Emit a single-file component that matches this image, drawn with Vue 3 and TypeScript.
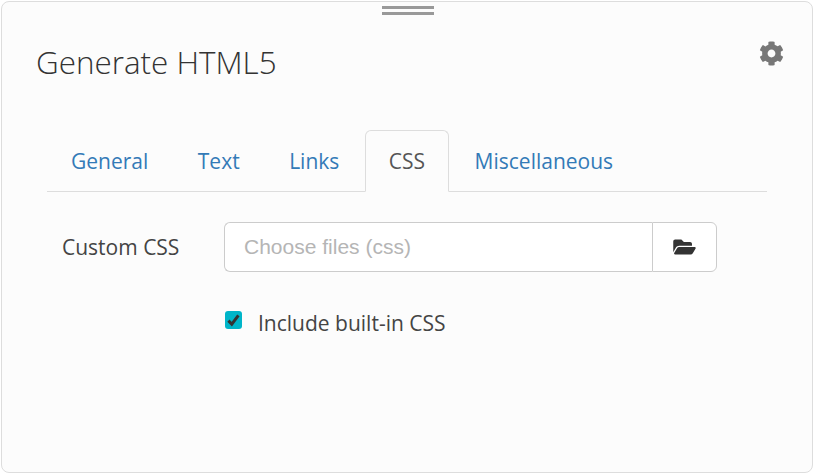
<script setup lang="ts">
const tabs: string[] = ['General', 'Text', 'Links', 'CSS', 'Miscellaneous']
const active = 'CSS'
</script>

<template>
  <div class="panel">
    <div class="handle"></div>
    <header class="head">
      <h1 class="title">Generate HTML5</h1>
      <svg class="gear" viewBox="0 0 512 512" width="25" height="25" aria-hidden="true">
        <path fill="#777" d="M487.4 315.7l-42.6-24.6c4.3-23.2 4.3-47 0-70.2l42.6-24.6c4.9-2.8 7.1-8.6 5.5-14-11.1-35.6-30-67.8-54.7-94.6-3.8-4.1-10-5.1-14.8-2.3L380.8 110c-17.9-15.4-38.5-27.3-60.8-35.1V25.8c0-5.6-3.9-10.5-9.4-11.7-36.7-8.2-74.3-7.8-109.2 0-5.5 1.2-9.4 6.1-9.4 11.7V75c-22.2 7.9-42.8 19.8-60.8 35.1L88.7 85.5c-4.9-2.8-11-1.9-14.8 2.3-24.7 26.7-43.6 58.9-54.7 94.6-1.7 5.4.6 11.2 5.5 14L67.3 221c-4.3 23.2-4.3 47 0 70.2l-42.6 24.6c-4.9 2.8-7.1 8.6-5.5 14 11.1 35.6 30 67.8 54.7 94.6 3.8 4.1 10 5.1 14.8 2.3l42.6-24.6c17.9 15.4 38.5 27.3 60.8 35.1v49.2c0 5.6 3.9 10.5 9.4 11.7 36.7 8.2 74.3 7.8 109.2 0 5.5-1.2 9.4-6.1 9.4-11.7v-49.2c22.2-7.9 42.8-19.8 60.8-35.1l42.6 24.6c4.9 2.8 11 1.9 14.8-2.3 24.7-26.7 43.6-58.9 54.7-94.6 1.5-5.5-.7-11.3-5.6-14.1zM256 336c-44.1 0-80-35.9-80-80s35.9-80 80-80 80 35.9 80 80-35.9 80-80 80z"/>
      </svg>
    </header>

    <nav class="tabs">
      <a
        v-for="tab in tabs"
        :key="tab"
        class="tab"
        :class="{ active: tab === active }"
      >{{ tab }}</a>
    </nav>

    <div class="row">
      <label class="label">Custom CSS</label>
      <div class="group">
        <input class="input" type="text" placeholder="Choose files (css)" />
        <button class="browse" type="button" aria-label="Browse">
          <svg viewBox="0 0 576 512" width="23" height="20" aria-hidden="true">
            <path fill="#333" d="M572.694 292.093L500.27 416.248A63.997 63.997 0 0 1 444.989 448H45.025c-18.523 0-30.064-20.093-20.731-36.093l72.424-124.155A64 64 0 0 1 152 256h399.964c18.523 0 30.064 20.093 20.73 36.093zM152 224h328v-48c0-26.51-21.49-48-48-48H272l-64-64H48C21.49 64 0 85.49 0 112v278.046l69.077-118.418C86.214 242.25 117.989 224 152 224z"/>
          </svg>
        </button>
      </div>
    </div>

    <label class="check">
      <span class="box">
        <svg viewBox="0 0 17 18" width="17" height="18" aria-hidden="true">
          <path d="M3.4 9.6 L6.8 13.2 L13.4 4.4" fill="none" stroke="#333" stroke-width="3"/>
        </svg>
      </span>
      <span>Include built-in CSS</span>
    </label>
  </div>
</template>

<style>
html, body { margin: 0; background: #fff; }
</style>

<style scoped>
.panel {
  position: relative;
  box-sizing: border-box;
  width: 812px;
  height: 472px;
  margin: 1px 0 0 1px;
  background: #fcfcfc;
  border: 1px solid #ddd;
  border-radius: 8px;
  font-family: "Open Sans", sans-serif;
  color: #444;
}
.handle {
  position: absolute;
  left: 380px;
  top: 4px;
  width: 52px;
  height: 3px;
  border-top: 3px solid #999;
  border-bottom: 3px solid #999;
}
.head {
  display: flex;
  justify-content: space-between;
  align-items: flex-start;
  padding: 39px 28px 0 34px;
}
.title {
  margin: 0;
  font-size: 31.4px;
  line-height: 42px;
  font-weight: 300;
  color: #333;
}
.tabs {
  display: flex;
  margin: 47px 45px 0 45px;
  height: 62px;
  box-sizing: border-box;
  border-bottom: 1px solid #ddd;
  gap: 1.5px;
}
.tab {
  box-sizing: border-box;
  height: 62px;
  padding: 0 23px;
  line-height: 60px;
  font-size: 21px;
  color: #337ab7;
  border: 1px solid transparent;
  border-radius: 6px 6px 0 0;
}
.tab.active {
  color: #555;
  background: #fcfcfc;
  border-color: #ddd;
  border-bottom-color: #fcfcfc;
}
.row {
  display: flex;
  align-items: center;
  margin: 30px 0 0 60px;
}
.label {
  width: 162px;
  font-size: 21px;
}
.group {
  display: flex;
  width: 493px;
  height: 50px;
}
.input {
  flex: 1;
  min-width: 0;
  box-sizing: border-box;
  height: 50px;
  padding: 0 19px;
  border: 1px solid #ccc;
  border-right: 0;
  border-radius: 6px 0 0 6px;
  background: #fff;
  font-family: "Liberation Sans", Arial, sans-serif;
  font-size: 21px;
  outline: none;
}
.input::placeholder { color: #b5b5b5; opacity: 1; }
.browse {
  box-sizing: border-box;
  width: 65px;
  height: 50px;
  padding: 0;
  display: flex;
  align-items: center;
  justify-content: center;
  background: #fff;
  border: 1px solid #ccc;
  border-radius: 0 6px 6px 0;
}
.check {
  display: flex;
  align-items: center;
  margin: 35px 0 0 222px;
  font-size: 21px;
  line-height: 32px;
}
.box {
  display: block;
  width: 17px;
  height: 18px;
  margin: 0 16px 7px 1px;
  background: #00b5c9;
  border-radius: 3px;
}
.box svg { display: block; }
</style>
